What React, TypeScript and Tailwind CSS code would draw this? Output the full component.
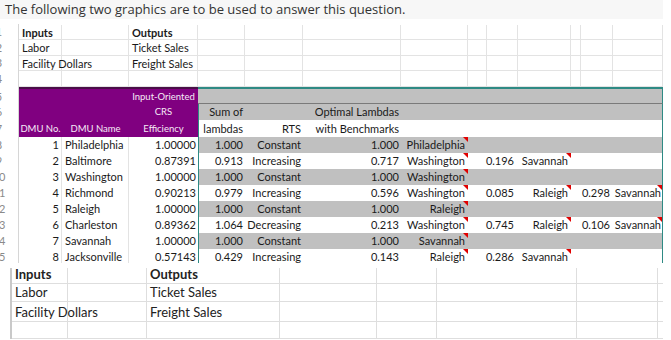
import React from 'react'

type Row = {
  n: number
  no: number
  name: string
  eff: string
  sum: string
  rts: string
  v1: string
  b1: string
  v2?: string
  b2?: string
  v3?: string
  b3?: string
}

const rows: Row[] = [
  { n: 8, no: 1, name: 'Philadelphia', eff: '1.00000', sum: '1.000', rts: 'Constant', v1: '1.000', b1: 'Philadelphia' },
  { n: 9, no: 2, name: 'Baltimore', eff: '0.87391', sum: '0.913', rts: 'Increasing', v1: '0.717', b1: 'Washington', v2: '0.196', b2: 'Savannah' },
  { n: 10, no: 3, name: 'Washington', eff: '1.00000', sum: '1.000', rts: 'Constant', v1: '1.000', b1: 'Washington' },
  { n: 11, no: 4, name: 'Richmond', eff: '0.90213', sum: '0.979', rts: 'Increasing', v1: '0.596', b1: 'Washington', v2: '0.085', b2: 'Raleigh', v3: '0.298', b3: 'Savannah' },
  { n: 12, no: 5, name: 'Raleigh', eff: '1.00000', sum: '1.000', rts: 'Constant', v1: '1.000', b1: 'Raleigh' },
  { n: 13, no: 6, name: 'Charleston', eff: '0.89362', sum: '1.064', rts: 'Decreasing', v1: '0.213', b1: 'Washington', v2: '0.745', b2: 'Raleigh', v3: '0.106', b3: 'Savannah' },
  { n: 14, no: 7, name: 'Savannah', eff: '1.00000', sum: '1.000', rts: 'Constant', v1: '1.000', b1: 'Savannah' },
  { n: 15, no: 8, name: 'Jacksonville', eff: '0.57143', sum: '0.429', rts: 'Increasing', v1: '0.143', b1: 'Raleigh', v2: '0.286', b2: 'Savannah' },
]

function RowNum({ n }: { n: number }) {
  return (
    <div className="w-[19px] shrink-0 overflow-hidden border-r border-[#d6d6d6] text-[#8a8a8a]">
      <div className="-ml-[13px] w-[24px] text-center">{n}</div>
    </div>
  )
}

// little red comment marker in the corner
function Note() {
  return (
    <span className="absolute right-0 top-0 h-0 w-0 border-l-[5px] border-t-[5px] border-l-transparent border-t-[#e00000]" />
  )
}

function TopGrid() {
  const cells = [
    'w-[43px]', 'w-[67px]', 'w-[69px]', 'w-[47px]', 'w-[58px]', 'w-[98px]', 'w-[67px]',
    'w-[19px]', 'w-[31px]', 'w-[53px]', 'w-[10px]', 'w-[32px]', 'w-[50px]',
  ]
  const data = [
    { n: 1, h: 'h-[15px]', a: 'Inputs', c: 'Outputs', bold: true },
    { n: 2, h: 'h-[16px]', a: 'Labor', c: 'Ticket Sales' },
    { n: 3, h: 'h-[15px]', a: 'Facility Dollars', c: 'Freight Sales' },
    { n: 4, h: 'h-[16px]', a: '', c: '' },
  ]
  return (
    <div>
      {data.map((r) => (
        <div key={r.n} className={`flex ${r.h} items-center`}>
          <RowNum n={r.n} />
          {cells.map((w, i) => (
            <div
              key={i}
              className={`${w} h-full shrink-0 whitespace-nowrap border-b border-r border-[#e3e3e3] pl-[3px] leading-[15px] ${r.bold ? 'font-bold' : ''}`}
            >
              {i === 0 ? r.a : i === 2 ? r.c : ''}
            </div>
          ))}
        </div>
      ))}
    </div>
  )
}

function Header() {
  return (
    <div>
      <div className="flex h-[2px]">
        <div className="w-[19px] border-r border-[#d6d6d6]" />
        <div className="w-[179px] bg-[#4a0f48]" />
        <div className="w-[465px] bg-[#2e8a84]" />
      </div>
      {/* row 5 */}
      <div className="flex h-[15px] leading-[15px]">
        <RowNum n={5} />
        <div className="flex w-[179px] whitespace-nowrap bg-[#800080] text-[9.5px] text-[#f6eaf6]">
          <div className="w-[110px]" />
          <div className="w-[69px] text-center">Input-Oriented</div>
        </div>
        <div className="w-[465px] border-b border-r border-b-[#7a7a7a] border-r-[#2e8a84] bg-[#c0c0c0]" />
      </div>
      {/* row 6 */}
      <div className="flex h-[16px] leading-[16px]">
        <RowNum n={6} />
        <div className="flex w-[179px] whitespace-nowrap bg-[#800080] text-[9.5px] text-[#f6eaf6]">
          <div className="w-[110px]" />
          <div className="w-[69px] text-center">CRS</div>
        </div>
        <div className="flex w-[465px] border-x border-[#2e8a84] bg-[#c0c0c0]">
          <div className="w-[46px] pr-[2px] text-right">Sum of</div>
          <div className="w-[58px]" />
          <div className="w-[98px] pr-[2px] text-right">Optimal Lambdas</div>
        </div>
      </div>
      {/* row 7 */}
      <div className="flex h-[17px] leading-[17px]">
        <RowNum n={7} />
        <div className="flex w-[179px] whitespace-nowrap bg-[#800080] text-[9.5px] text-[#f6eaf6]">
          <div className="w-[43px] text-center">DMU No.</div>
          <div className="w-[67px] text-center">DMU Name</div>
          <div className="w-[69px] text-center">Efficiency</div>
        </div>
        <div className="flex w-[465px] border-x border-[#2e8a84] bg-white">
          <div className="w-[46px] pr-[2px] text-right">lambdas</div>
          <div className="w-[58px] pr-[2px] text-right">RTS</div>
          <div className="w-[98px] pr-[2px] text-right">with Benchmarks</div>
        </div>
      </div>
    </div>
  )
}

function DataRow({ r, last }: { r: Row; last: boolean }) {
  const band = r.no % 2 === 1 ? 'bg-[#c0c0c0]' : 'bg-white'
  return (
    <div className={`flex ${last ? 'h-[14px] overflow-hidden' : 'h-[16px]'} leading-[16px]`}>
      <RowNum n={r.n} />
      <div className="w-[43px] border-r border-[#e3e3e3] pr-[2px] text-right">{r.no}</div>
      <div className="w-[67px] whitespace-nowrap border-r border-[#e3e3e3] pl-[3px]">{r.name}</div>
      <div className="w-[69px] pr-[2px] text-right">{r.eff}</div>
      <div className={`flex w-[465px] border-x border-[#2e8a84] ${band}`}>
        <div className="w-[46px] pr-[2px] text-right">{r.sum}</div>
        <div className="w-[58px] pr-[2px] text-right">{r.rts}</div>
        <div className="w-[98px] pr-[2px] text-right">{r.v1}</div>
        <div className="relative w-[67px] pr-[3px] text-right">
          {r.b1}
          <Note />
        </div>
        <div className="w-[50px] pr-[4px] text-right">{r.v2}</div>
        <div className="relative w-[53px] pr-[3px] text-right">
          {r.b2}
          {r.b2 && <Note />}
        </div>
        <div className="w-[42px] pr-[3px] text-right">{r.v3}</div>
        <div className="relative w-[49px] pr-[1px] text-right">
          {r.b3}
          {r.b3 && <Note />}
        </div>
      </div>
    </div>
  )
}

function BottomTable() {
  const cols = ['w-[56px]', 'w-[79px]', 'w-[133px]', 'w-[97px]', 'w-[60px]', 'w-[140px]', 'w-[81px]', 'w-[5px]']
  const data = [
    { h: 'h-[16px]', a: 'Inputs', c: 'Outputs', bold: true },
    { h: 'h-[18px]', a: 'Labor', c: 'Ticket Sales' },
    { h: 'h-[20px]', a: 'Facility Dollars', c: 'Freight Sales' },
    { h: 'h-[17px]', a: '', c: '' },
  ]
  return (
    <div className="mt-[5px] text-[13px] text-[#222]">
      {data.map((r, k) => (
        <div key={k} className={`flex ${r.h}`}>
          <div className="w-[10px]" />
          <div className="w-[2px] bg-[#c9c9c9]" />
          {cols.map((w, i) => (
            <div
              key={i}
              className={`${w} flex items-end whitespace-nowrap border-b border-[#dedede] pb-[1px] pl-[3px] leading-[16px] ${i < 7 ? 'border-r' : ''} ${r.bold ? 'font-bold' : ''}`}
            >
              {i === 0 ? r.a : i === 2 ? r.c : ''}
            </div>
          ))}
        </div>
      ))}
    </div>
  )
}

export default function App() {
  return (
    <div className="h-[340px] w-[671px] overflow-hidden bg-white font-['Lato',sans-serif] text-[#1a1a1a]">
      <div className="h-[19px] w-[663px] whitespace-nowrap bg-[#f7f7f7] pl-[5px] font-['Open_Sans',sans-serif] text-[13px] leading-[18px] text-[#333]">
        The following two graphics are to be used to answer this question.
      </div>
      <div className="h-[6px]" />
      <div className="text-[11px]">
        <TopGrid />
        <Header />
        {rows.map((r, i) => (
          <DataRow key={r.n} r={r} last={i === rows.length - 1} />
        ))}
      </div>
      <BottomTable />
    </div>
  )
}
